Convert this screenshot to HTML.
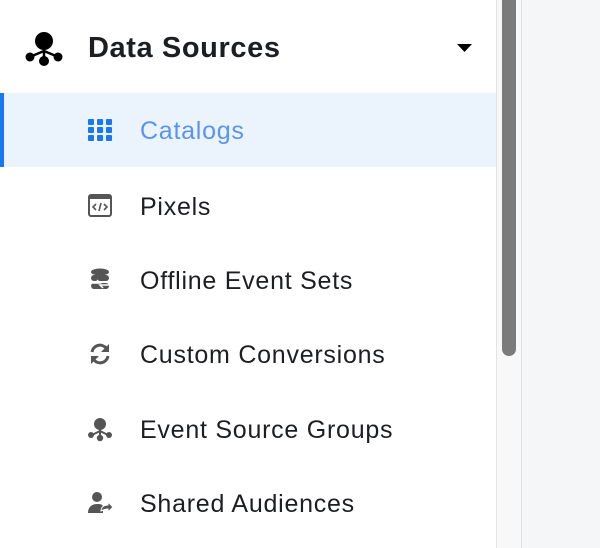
<!DOCTYPE html>
<html><head><style>
body{margin:0;width:600px;height:548px;overflow:hidden;background:#f5f6f8;font-family:"Liberation Sans",Helvetica,Arial,sans-serif;position:relative}
.side{position:absolute;left:0;top:0;width:496px;height:548px;background:#fff;border-right:1px solid #e3e3e3}
.track{position:absolute;left:497px;top:0;width:24px;height:548px;background:#f8f8f8;border-right:1px solid #e0e0e0}
.thumb{position:absolute;left:502px;top:0;width:14px;height:356px;background:#7b7b7b;border-radius:0 0 7px 7px}
.hd{position:absolute;left:88px;top:32px;font-size:29px;font-weight:bold;color:#1c1e21;letter-spacing:0.6px}
.row{position:absolute;left:0;width:496px;height:74px}
.row span{position:absolute;left:140px;top:50%;transform:translateY(-45%);font-size:25px;letter-spacing:0.75px;color:#1c1e21}
.row svg{position:absolute;left:86px;top:50%;transform:translateY(-50%)}
.act{background:#ebf4fd}
.act:before{content:"";position:absolute;left:0;top:0;width:4px;height:74px;background:#1877f2}
.act span{color:#5b93ef}
</style></head><body>
<div class="side">
<svg style="position:absolute;left:25px;top:31px" width="38" height="36" viewBox="0 0 38 36"><circle cx="19" cy="10" r="9" fill="#000"/><path d="M19 17v10M19 20L7 25M19 20l12 5" stroke="#000" stroke-width="2.5"/><circle cx="5" cy="26" r="4.5" fill="#000"/><circle cx="33" cy="26" r="4.5" fill="#000"/><circle cx="19" cy="30" r="5" fill="#000"/></svg>
<div class="hd">Data Sources</div>
<svg style="position:absolute;left:457px;top:43px" width="15" height="10"><path d="M0 1h15l-7.5 8z" fill="#000"/></svg>
<div class="row act" style="top:93px"><svg width="28" height="28" viewBox="0 0 28 28"><g fill="#1877f2"><rect x="2" y="3" width="6" height="6" rx="1"/><rect x="11" y="3" width="6" height="6" rx="1"/><rect x="20" y="3" width="6" height="6" rx="1"/><rect x="2" y="11" width="6" height="6" rx="1"/><rect x="11" y="11" width="6" height="6" rx="1"/><rect x="20" y="11" width="6" height="6" rx="1"/><rect x="2" y="19" width="6" height="6" rx="1"/><rect x="11" y="19" width="6" height="6" rx="1"/><rect x="20" y="19" width="6" height="6" rx="1"/></g></svg><span>Catalogs</span></div>
<div class="row" style="top:169px"><svg width="28" height="28" viewBox="0 0 28 28"><rect x="3" y="3" width="22" height="21" rx="2" fill="none" stroke="#555" stroke-width="2"/><rect x="3" y="3" width="22" height="4" fill="#555"/><path d="M10 12l-3 3 3 3M18 12l3 3-3 3M15 11l-2 8" stroke="#555" stroke-width="1.6" fill="none"/></svg><span>Pixels</span></div>
<div class="row" style="top:243px"><svg width="28" height="28" viewBox="0 0 28 28"><ellipse cx="14" cy="6" rx="9" ry="3.5" fill="#555"/><rect x="5" y="9" width="18" height="6" rx="3" fill="#555"/><rect x="5" y="17" width="18" height="6" rx="3" fill="#555"/><path d="M4 17h10l-3-3M24 19H14l3 3" stroke="#fff" stroke-width="1.5" fill="none"/></svg><span>Offline Event Sets</span></div>
<div class="row" style="top:317px"><svg width="28" height="28" viewBox="0 0 28 28"><path d="M6 12a8 8 0 0 1 14-4M22 16a8 8 0 0 1-14 4" stroke="#555" stroke-width="3" fill="none"/><path d="M23 4v8h-8zM5 24v-8h8z" fill="#555"/></svg><span>Custom Conversions</span></div>
<div class="row" style="top:392px"><svg width="28" height="28" viewBox="0 0 28 28"><circle cx="14" cy="9" r="6" fill="#555"/><path d="M14 14v8M14 16l-8 4M14 16l8 4" stroke="#555" stroke-width="2"/><circle cx="5" cy="20" r="3" fill="#555"/><circle cx="23" cy="20" r="3" fill="#555"/><circle cx="14" cy="23" r="3.2" fill="#555"/></svg><span>Event Source Groups</span></div>
<div class="row" style="top:466px"><svg width="28" height="28" viewBox="0 0 28 28"><circle cx="11" cy="8" r="5" fill="#555"/><path d="M2 24c0-6 4-9 9-9s5 1 6 2v7z" fill="#555"/><path d="M15 22c0-4 3-6 7-6v-3l5 5-5 5v-3c-3 0-5 1-7 2z" fill="#555" stroke="#fff" stroke-width="1"/></svg><span>Shared Audiences</span></div>
</div>
<div class="track"></div>
<div class="thumb"></div>
</body></html>
